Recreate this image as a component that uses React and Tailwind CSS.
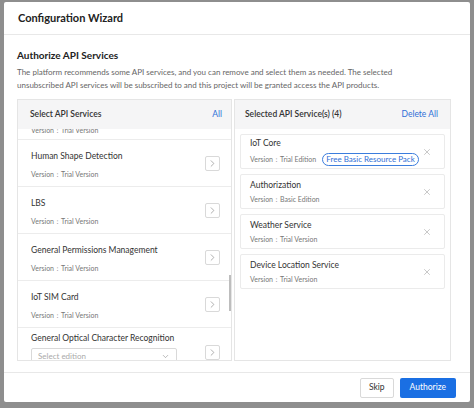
import { ChevronRight, ChevronDown, X } from "lucide-react";

const leftItems = [
  { name: "Human Shape Detection", version: "Trial Version" },
  { name: "LBS", version: "Trial Version" },
  { name: "General Permissions Management", version: "Trial Version" },
  { name: "IoT SIM Card", version: "Trial Version" },
];

const selected = [
  { name: "IoT Core", version: "Trial Edition", pack: true },
  { name: "Authorization", version: "Basic Edition" },
  { name: "Weather Service", version: "Trial Version" },
  { name: "Device Location Service", version: "Trial Version" },
];

const AddButton = () => (
  <button className="flex h-[15px] w-[15px] items-center justify-center rounded-[2px] border border-[#d9d9d9] bg-white text-[#8c8c8c]">
    <ChevronRight size={11} strokeWidth={1.5} />
  </button>
);

const LeftItem = ({ name, version }) => (
  <div className="flex h-[47px] shrink-0 items-center justify-between border-b border-[#ececec] pl-[13px] pr-[11px]">
    <div className="flex h-full flex-col gap-[8px] pt-[11px]">
      <span className="whitespace-nowrap text-[8.5px] leading-[11px] text-[#333]">{name}</span>
      <span className="whitespace-nowrap text-[7px] leading-[9px] text-[#777]">Version：{version}</span>
    </div>
    <AddButton />
  </div>
);

const SelectedCard = ({ name, version, pack }) => (
  <div className="flex h-[35px] items-center justify-between rounded-[2px] border border-[#ebebeb] bg-white pl-[9px] pr-[12px]">
    <div className="flex flex-col gap-[4px]">
      <span className="whitespace-nowrap text-[8.5px] leading-[11px] text-[#333]">{name}</span>
      <div className="flex items-center gap-[6px]">
        <span className="whitespace-nowrap text-[7px] leading-[9px] text-[#777]">Version：{version}</span>
        {pack && (
          <span className="whitespace-nowrap rounded-full border border-[#3b7ddd] px-[3px] text-[8px] leading-[11px] text-[#2f6fd6]">
            Free Basic Resource Pack
          </span>
        )}
      </div>
    </div>
    <X size={10} strokeWidth={1.3} className="text-[#999]" />
  </div>
);

export default function App() {
  return (
    <div
      className="h-[408px] w-[474px] overflow-hidden bg-[#8e8e8e] pl-[4px] pt-[2px]"
      style={{ fontFamily: "Lato, 'Liberation Sans', sans-serif" }}
    >
      <div className="flex h-[400px] w-[466px] flex-col rounded-[2px] bg-white">
        <div className="flex h-[33px] shrink-0 items-center border-b border-[#e8e8e8] px-[14px]">
          <h1 className="text-[11px] font-bold text-[#222]">Configuration Wizard</h1>
        </div>

        <div className="flex flex-1 flex-col px-[13px] pt-[14px]">
          <h2 className="text-[10px] font-bold leading-[13px] text-[#222]">Authorize API Services</h2>
          <p className="mt-[4px] text-[8px] leading-[13px] text-[#666]">
            The platform recommends some API services, and you can remove and select them as needed. The selected
            <br />
            unsubscribed API services will be subscribed to and this project will be granted access the API products.
          </p>

          <div className="mt-[7px] flex h-[262px] w-[434px] gap-[2px]">
            <div className="relative flex w-[215px] flex-col overflow-hidden border border-[#e5e5e5]">
              <div className="flex h-[29px] shrink-0 items-center justify-between bg-[#f5f5f6] pl-[12px] pr-[9px]">
                <span className="text-[8.5px] font-semibold text-[#333]">Select API Services</span>
                <span className="text-[8.5px] text-[#2f6fd6]">All</span>
              </div>
              <div className="flex flex-col overflow-hidden">
                <div className="-mt-[36px] flex h-[47px] shrink-0 flex-col justify-end border-b border-[#ececec] pb-[4px] pl-[13px]">
                  <span className="text-[7px] leading-[9px] text-[#777]">Version：Trial Version</span>
                </div>
                {leftItems.map((item) => (
                  <LeftItem key={item.name} {...item} />
                ))}
                <div className="flex shrink-0 items-start justify-between pl-[13px] pr-[11px] pt-[5px]">
                  <div className="flex flex-col gap-[4px]">
                    <span className="whitespace-nowrap text-[8.5px] leading-[11px] text-[#333]">
                      General Optical Character Recognition
                    </span>
                    <div className="flex h-[16px] w-[146px] items-center justify-between rounded-[2px] border border-[#d9d9d9] px-[6px] text-[8px] text-[#aaa]">
                      Select edition
                      <ChevronDown size={9} strokeWidth={1.5} className="text-[#888]" />
                    </div>
                  </div>
                  <div className="mt-[12px]">
                    <AddButton />
                  </div>
                </div>
              </div>
              <div className="absolute right-0 top-[175px] h-[36px] w-[2px] bg-[#bdbdbd]" />
            </div>

            <div className="flex w-[217px] flex-col border border-[#e5e5e5]">
              <div className="flex h-[29px] shrink-0 items-center justify-between bg-[#f5f5f6] pl-[10px] pr-[12px]">
                <span className="text-[8.5px] font-semibold text-[#333]">Selected API Service(s) (4)</span>
                <span className="text-[8.5px] text-[#2f6fd6]">Delete All</span>
              </div>
              <div className="flex flex-col gap-[5px] px-[5px] pt-[5px]">
                {selected.map((item) => (
                  <SelectedCard key={item.name} {...item} />
                ))}
              </div>
            </div>
          </div>
        </div>

        <div className="flex h-[30px] shrink-0 items-center justify-end gap-[6px] border-t border-[#e8e8e8] pr-[14px]">
          <button className="h-[20px] rounded-[2px] border border-[#d9d9d9] bg-white px-[8px] text-[8.5px] text-[#333]">
            Skip
          </button>
          <button className="h-[20px] rounded-[2px] bg-[#1a6fe3] px-[10px] text-[8.5px] text-white">Authorize</button>
        </div>
      </div>
    </div>
  );
}
